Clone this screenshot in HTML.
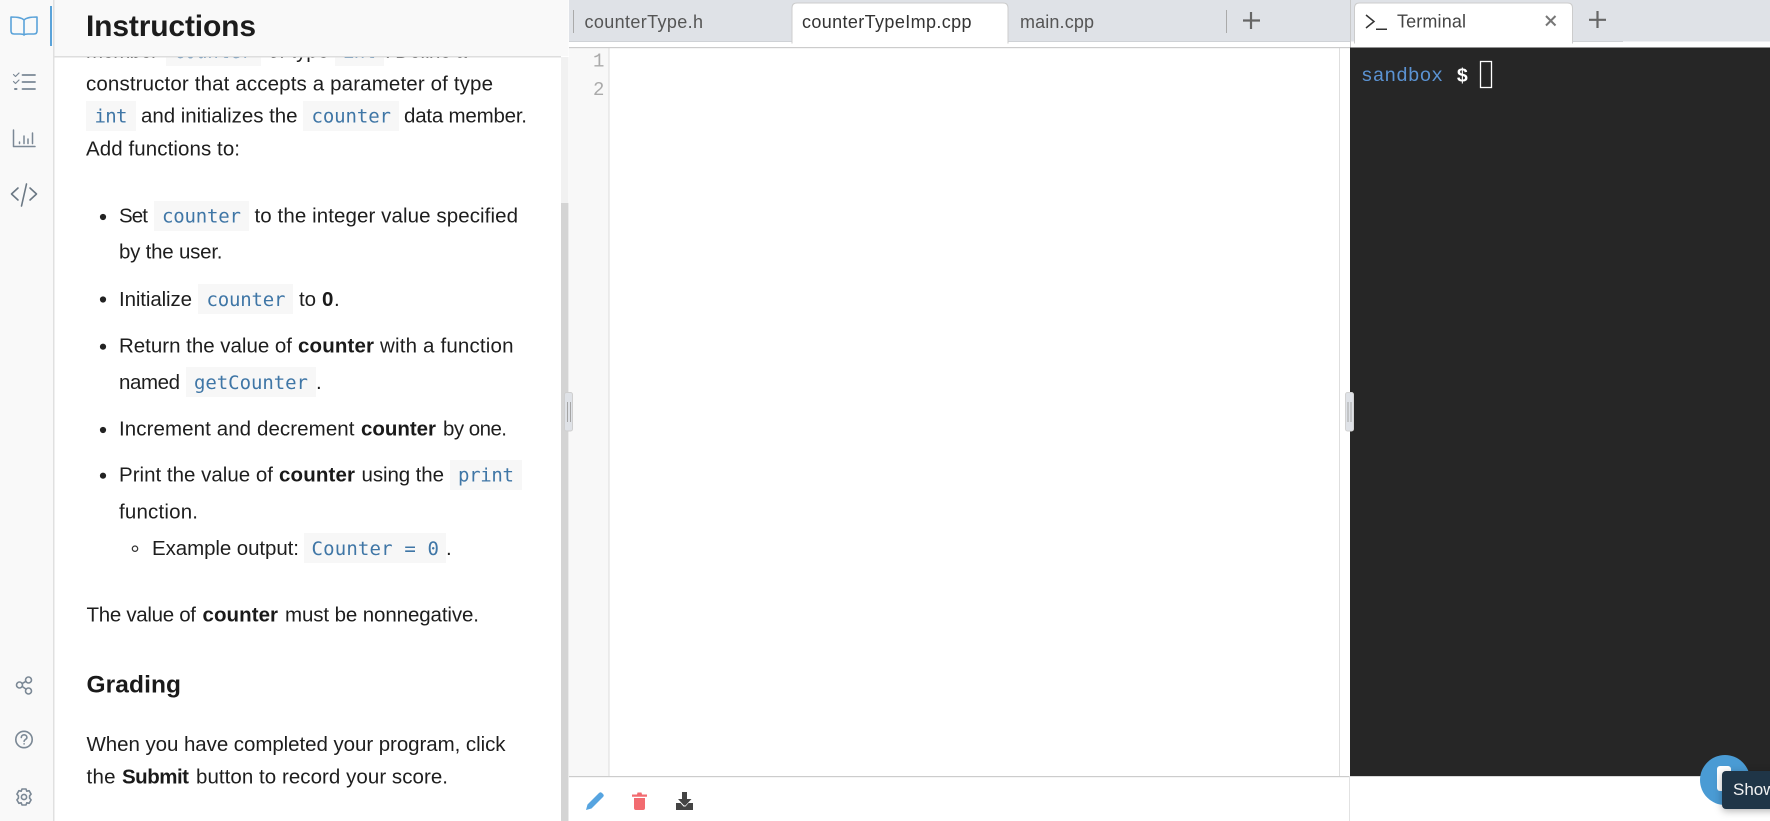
<!DOCTYPE html>
<html lang="en"><head><meta charset="utf-8"><title>Instructions</title>
<style>
html,body{margin:0;padding:0;background:#fff;width:1770px;height:821px;overflow:hidden}
svg{display:block}
.t{font:20.5px "Liberation Sans",sans-serif;fill:#1e1e1e}
.b{font:bold 20.5px "Liberation Sans",sans-serif;fill:#1a1a1a}
.m{font:19px "DejaVu Sans Mono","Liberation Mono",monospace;fill:#3f76a6}
.c{fill:#f7f7f7}
.tab{font:18px "Liberation Sans",sans-serif;fill:#555}
.ic{fill:none;stroke:#7b8895;stroke-width:1.6;stroke-linecap:round;stroke-linejoin:round}
</style></head><body>
<svg xmlns="http://www.w3.org/2000/svg" width="1770" height="821" viewBox="0 0 1770 821">
<rect width="1770" height="821" fill="#fff"/>
<!-- sidebar -->
<rect x="0" y="0" width="53" height="821" fill="#f9f9f9"/>
<rect x="53" y="0" width="1.5" height="821" fill="#e0e0e0"/>
<rect x="50" y="6" width="2" height="40" fill="#5ba3d9"/>
<path d="M24 20c-2-2-5-3-13-3v14q0 3 3 3h6q3 0 4 1q1-1 4-1h6q3 0 3-3V17c-8 0-11 1-13 3zM24 20v15" fill="none" stroke="#5ba3d9" stroke-width="1.6" stroke-linejoin="round"/>
<g class="ic">
<path d="M22.500 75H35M22.500 82H35M22.500 89H35" stroke-width="1.8"/>
<path d="M13.500 74.500l2 2 3.500-3.500M13.500 81.500l2 2 3.500-3.500" stroke-width="1.200"/>
<path d="M15 89h1.500" stroke-width="2"/>
<path d="M13.500 130v16.500H35" stroke-width="1.500"/>
<path d="M19.500 142v1.500M24 136v7.500M28 139v4.500M32.500 133v10.500" stroke-width="1.500"/>
<path d="M18 188l-6.500 6 6.500 6M30 188l6.500 6-6.500 6M26.500 184L21.500 206" stroke="#6b7884"/>
<circle cx="19.500" cy="685" r="3"/><circle cx="28.500" cy="680" r="3"/><circle cx="28.500" cy="691" r="3"/>
<path d="M22.200 683.500l3.800-2.200M22.200 686.500l3.800 2.600"/>
<circle cx="24" cy="739.500" r="8.200"/>
<path d="M21.300 737.500c0-3.600 5.600-3.600 5.600 0 0 2-2.800 2-2.800 3.800M24.100 743.800v.1"/>
<circle cx="24" cy="797" r="2.600"/>
<path d="M22 789h4l.8 2.200 2.300-.5 2 3.400-1.500 1.700 0 2.400 1.500 1.700-2 3.400-2.300-.5-.8 2.200h-4l-.8-2.200-2.300.5-2-3.400 1.500-1.700v-2.400l-1.500-1.700 2-3.400 2.300.5z"/>
</g>
<!-- instructions body -->
<rect x="54.500" y="0" width="506.500" height="821" fill="#fff"/>
<text class="t" x="86" y="58" textLength="72">member</text>
<rect class="c" x="166" y="36" width="95" height="30"/><text class="m" x="173.500" y="58" textLength="79">counter</text>
<text class="t" x="268" y="58" textLength="61">of type</text>
<rect class="c" x="335" y="36" width="49" height="30"/><text class="m" x="343" y="58" textLength="33">int</text>
<text class="t" x="385" y="58" textLength="82">. Define a</text>

<text class="t" x="86" y="90.700" textLength="407">constructor that accepts a parameter of type</text>
<rect class="c" x="86" y="101" width="50" height="30"/><text class="m" x="94.500" y="122.700" textLength="33">int</text>
<text class="t" x="141" y="122.700" textLength="156.500">and initializes the</text>
<rect class="c" x="303" y="101" width="96" height="30"/><text class="m" x="311.500" y="122.700" textLength="79.500">counter</text>
<text class="t" x="404" y="122.700" textLength="123">data member.</text>
<text class="t" x="86" y="155.700" textLength="154">Add functions to:</text>

<circle cx="103" cy="217" r="3.100" fill="#222"/>
<text class="t" x="119" y="222.700" textLength="29">Set</text>
<rect class="c" x="154" y="201" width="95" height="30"/><text class="m" x="162" y="222.700" textLength="79">counter</text>
<text class="t" x="254.500" y="222.700" textLength="263.500">to the integer value specified</text>
<text class="t" x="119" y="258.700" textLength="103.500">by the user.</text>

<circle cx="103" cy="299.500" r="3.100" fill="#222"/>
<text class="t" x="119" y="306" textLength="73">Initialize</text>
<rect class="c" x="198" y="284" width="95" height="30"/><text class="m" x="206.500" y="306" textLength="79">counter</text>
<text class="t" x="299" y="306" textLength="17">to</text>
<text class="b" x="322" y="306" textLength="12">0</text>
<text class="t" x="334" y="306">.</text>

<circle cx="103" cy="346.700" r="3.100" fill="#222"/>
<text class="t" x="119" y="352.700" textLength="173">Return the value of</text>
<text class="b" x="298" y="352.700" textLength="76">counter</text>
<text class="t" x="380" y="352.700" textLength="133.500">with a function</text>
<text class="t" x="119" y="389" textLength="61">named</text>
<rect class="c" x="186" y="367" width="130" height="30"/><text class="m" x="194" y="389" textLength="114">getCounter</text>
<text class="t" x="316" y="389">.</text>

<circle cx="103" cy="430" r="3.100" fill="#222"/>
<text class="t" x="119" y="435.700" textLength="235.500">Increment and decrement</text>
<text class="b" x="361" y="435.700" textLength="75">counter</text>
<text class="t" x="443" y="435.700" textLength="64">by one.</text>

<circle cx="103" cy="475.700" r="3.100" fill="#222"/>
<text class="t" x="119" y="481.700" textLength="154">Print the value of</text>
<text class="b" x="279" y="481.700" textLength="76">counter</text>
<text class="t" x="361.500" y="481.700" textLength="82.500">using the</text>
<rect class="c" x="450" y="460" width="72" height="30"/><text class="m" x="458" y="481.700" textLength="56">print</text>
<text class="t" x="119" y="518.700" textLength="79">function.</text>

<circle cx="135" cy="548.700" r="2.700" fill="none" stroke="#333" stroke-width="1.200"/>
<text class="t" x="152" y="555" textLength="147">Example output:</text>
<rect class="c" x="304" y="533" width="142" height="30"/><text class="m" x="311.500" y="555" textLength="127.500">Counter = 0</text>
<text class="t" x="446" y="555">.</text>

<text class="t" x="86.500" y="621.700" textLength="109.500">The value of</text>
<text class="b" x="202.500" y="621.700" textLength="75.500">counter</text>
<text class="t" x="285" y="621.700" textLength="194">must be nonnegative.</text>

<text x="86.500" y="692.700" textLength="94.500" style="font:bold 24.500px 'Liberation Sans',sans-serif;fill:#1a1a1a">Grading</text>
<text class="t" x="86.500" y="751" textLength="419">When you have completed your program, click</text>
<text class="t" x="86.500" y="783.700" textLength="29">the</text>
<text class="b" x="122" y="783.700" textLength="67">Submit</text>
<text class="t" x="196" y="783.700" textLength="252">button to record your score.</text>

<!-- instructions header -->
<rect x="54.500" y="0" width="514" height="56" fill="#f9f9f9"/>
<rect x="54.500" y="56" width="506.500" height="1.500" fill="#dedede"/>
<text x="86" y="36" textLength="170" style="font:bold 30px 'Liberation Sans',sans-serif;fill:#1c1c1c">Instructions</text>

<!-- scrollbar -->
<rect x="561" y="57" width="7.500" height="764" fill="#f1f1f1"/>
<rect x="561" y="203" width="7.500" height="618" fill="#d4d4d4"/>

<!-- editor -->
<rect x="569" y="48" width="39.500" height="728" fill="#f8f8f8"/>
<rect x="608.500" y="48" width="1" height="728" fill="#dcdcdc"/>
<rect x="1339" y="48" width="1" height="728" fill="#dedede"/>
<rect x="569" y="0" width="781" height="41.500" fill="#dfe2e7"/>
<rect x="569" y="41" width="781" height="1" fill="#cfd2d6"/>
<rect x="569" y="47" width="781" height="1.200" fill="#cccccc"/>
<rect x="573" y="10" width="1" height="23" fill="#aaa"/>
<text class="tab" x="584.500" y="28" textLength="118.500">counterType.h</text>
<path d="M792 43V8q0-5 5-5h206q5 0 5 5v35z" fill="#fff" stroke="#ccc" stroke-width="1"/>
<rect x="792.500" y="41" width="215" height="6" fill="#fff"/>
<text class="tab" x="802" y="28" textLength="169.500" style="fill:#333">counterTypeImp.cpp</text>
<text class="tab" x="1020" y="28" textLength="74">main.cpp</text>
<rect x="1226" y="10" width="1" height="23" fill="#aaa"/>
<path d="M1251 12v17M1243 20.500h17" stroke="#666" stroke-width="2.200"/>
<text x="593" y="66.500" style="font:19px 'Liberation Mono',monospace;fill:#aaa">1</text>
<text x="593" y="95" style="font:19px 'Liberation Mono',monospace;fill:#aaa">2</text>
<!-- editor toolbar -->
<rect x="569" y="776" width="781" height="1.200" fill="#cccccc"/>
<path d="M586 810l1.500-5.500L599 793q1.500-1.500 3 0l1 1q1.500 1.500 0 3L591.500 808.500z" fill="#56a4e0"/>
<path d="M632 794.500h5l.5-2h4l.5 2h5v2.200h-15zM634 798h11v10q0 2-2 2h-7q-2 0-2-2z" fill="#f26b70"/>
<path d="M682 792h5v7h4.500l-6 6.500h-1.500l-6-6.500H682zM676 803h4.500l3 3.500h2l3-3.500h4.500v7h-17z" fill="#444"/>

<!-- terminal -->
<rect x="1350" y="0" width="420" height="41.500" fill="#dfe2e7"/>
<rect x="1572" y="41" width="51" height="1" fill="#cfd2d6"/>
<rect x="1350" y="0" width="1" height="48" fill="#c9c9c9"/>
<path d="M1354.500 43V8q0-5 5-5h208q5 0 5 5v35z" fill="#fff" stroke="#ccc" stroke-width="1"/>
<rect x="1355" y="41" width="217" height="6" fill="#fff"/>
<path d="M1366 15l8 6.500-8 6.500" fill="none" stroke="#333" stroke-width="1.500"/>
<rect x="1376" y="28.500" width="11" height="1.500" fill="#333"/>
<text class="tab" x="1397" y="27.500" textLength="69" style="fill:#444">Terminal</text>
<path d="M1546 16l9.500 9.500M1555.500 16l-9.500 9.500" stroke="#777" stroke-width="2"/>
<path d="M1597.500 11v17M1589 19.800h17" stroke="#666" stroke-width="2.200"/>
<rect x="1350" y="47.500" width="420" height="728.500" fill="#262626"/>
<text x="1361" y="81" textLength="82" style="font:19.500px 'Liberation Mono',monospace;fill:#5b93d3">sandbox</text>
<text x="1456.500" y="81.500" style="font:bold 19.500px 'Liberation Mono',monospace;fill:#fff">$</text>
<rect x="1480.500" y="61.500" width="11" height="26" fill="none" stroke="#fff" stroke-width="1.300"/>
<rect x="1350" y="776" width="420" height="1" fill="#d8d8d8"/>
<rect x="1349" y="776" width="1" height="45" fill="#e2e2e2"/>

<!-- resize handles -->
<g>
<rect x="564.500" y="392.500" width="8" height="38.500" rx="2" fill="#dfe2e7" stroke="#cfcfcf"/>
<path d="M567.500 402v20M570.500 402v20" stroke="#a5a5a5" stroke-width="1"/>
<rect x="1345.500" y="392.500" width="8" height="38.500" rx="2" fill="#dfe2e7" stroke="#d2d2d2"/>
<path d="M1348 402v20M1351 402v20" stroke="#a5a5a5" stroke-width="1"/>
</g>

<!-- chat bubble and tooltip -->
<circle cx="1725" cy="780" r="25" fill="#4a9bd4"/>
<rect x="1717" y="766" width="14" height="25" rx="3" fill="#fff"/>
<rect x="1722" y="771" width="60" height="38" rx="4" fill="#1f3547" style="filter:drop-shadow(0 2px 4px rgba(0,0,0,.3))"/>
<text x="1733" y="795" style="font:17px 'Liberation Sans',sans-serif;fill:#f2f2f2">Show</text>
</svg>
</body></html>
